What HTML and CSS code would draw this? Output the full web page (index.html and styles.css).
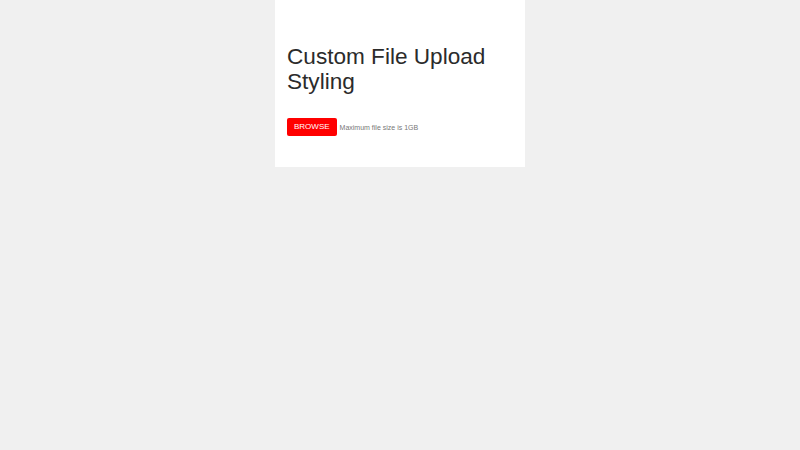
FILE: index.html
```
<!DOCTYPE html>
<html lang="en">
<head>
    <meta charset="UTF-8">
    <title>Custom File Upload Styling</title>
    <link rel="stylesheet" href="styles.css">
</head>
<body>

<!-- upload card -->
<div class="wrapper">
    <h1>Custom File Upload Styling</h1>

    <div class="upload">
        <label class="btn-browse" for="file">BROWSE</label>
        <input type="file" id="file" class="file-input">
        <span class="hint">Maximum file size is 1GB</span>
    </div>
</div>

</body>
</html>
```

FILE: styles.css
```
*{margin:0;padding:0;box-sizing:border-box;font-family:"Liberation Sans",Arial,sans-serif}
body{background:#f0f0f0;color:#333}
.wrapper{width:250px;margin:0 auto;background:#fff;padding:44px 12px 31px}
.wrapper h1{font-size:22.6px;font-weight:normal;line-height:25px;color:#2b2b2b;margin-bottom:24px}
.upload{display:flex;align-items:center}
.btn-browse{display:inline-block;background:#f00;color:#fff;font-size:8px;line-height:18px;height:18px;padding:0 7px;border-radius:2px;cursor:pointer}
.file-input{display:none}
.hint{font-size:7px;color:#777;margin-left:3px}
```
